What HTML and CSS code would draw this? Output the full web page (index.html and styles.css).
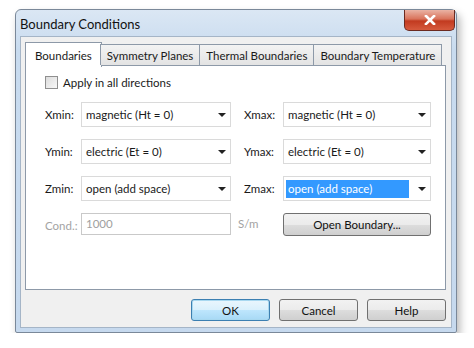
FILE: index.html
```html
<!DOCTYPE html>
<html lang="en">
<head>
  <meta charset="UTF-8">
  <title>Boundary Conditions</title>
  <link rel="stylesheet" href="styles.css">
</head>
<body>
  <!-- Dialog window -->
  <div class="window">
    <div class="titlebar">
      <span class="title">Boundary Conditions</span>
      <div class="close">
        <svg width="12" height="10" viewBox="0 0 12 10"><path d="M2 1 L10 9 M10 1 L2 9" stroke="#fff" stroke-width="2.6" stroke-linecap="square"/></svg>
      </div>
    </div>

    <div class="client">
      <!-- Tabs -->
      <div class="tabs">
        <div class="tab active">Boundaries</div>
        <div class="tab">Symmetry Planes</div>
        <div class="tab">Thermal Boundaries</div>
        <div class="tab">Boundary Temperature</div>
      </div>

      <div class="panel">
        <label class="check"><span class="box"></span>Apply in all directions</label>

        <div class="grid">
          <span class="lbl">Xmin:</span>
          <div class="combo"><span class="val">magnetic (Ht = 0)</span><span class="arrow"></span></div>
          <span class="lbl right">Xmax:</span>
          <div class="combo"><span class="val">magnetic (Ht = 0)</span><span class="arrow"></span></div>

          <span class="lbl">Ymin:</span>
          <div class="combo"><span class="val">electric (Et = 0)</span><span class="arrow"></span></div>
          <span class="lbl right">Ymax:</span>
          <div class="combo"><span class="val">electric (Et = 0)</span><span class="arrow"></span></div>

          <span class="lbl">Zmin:</span>
          <div class="combo"><span class="val">open (add space)</span><span class="arrow"></span></div>
          <span class="lbl right">Zmax:</span>
          <div class="combo focus"><span class="val">open (add space)</span><span class="arrow"></span></div>

          <span class="lbl disabled">Cond.:</span>
          <div class="input">1000</div>
          <span class="unit">S/m</span>
          <button class="btn">Open Boundary...</button>
        </div>
      </div>

      <!-- Dialog buttons -->
      <div class="actions">
        <button class="btn default">OK</button>
        <button class="btn">Cancel</button>
        <button class="btn">Help</button>
      </div>
    </div>
  </div>
</body>
</html>
```

FILE: styles.css
```css
/* General */
body {
  margin: 0;
  background: #fff;
  font-family: 'Lato', 'Liberation Sans', sans-serif;
  font-size: 11.5px;
  color: #1a1a1a;
}

/* Window frame */
.window {
  margin: 9px 0 0 15px;
  width: 440px;
  height: 322px;
  border: 1px solid #7a8899;
  border-radius: 6px 6px 2px 2px;
  background: linear-gradient(#dbe7f4, #c8dbef 40px, #c6d9ee);
  box-shadow: 3px 5px 9px rgba(0, 0, 0, 0.28);
  display: flex;
  flex-direction: column;
}

.titlebar {
  height: 27px;
  display: flex;
  align-items: flex-start;
  padding: 0 0 0 4px;
}

.title {
  margin-top: 6px;
  font-size: 13px;
  color: #111;
}

.close {
  margin-left: auto;
  margin-right: 1px;
  width: 49px;
  height: 20px;
  border: 1px solid #6b2a20;
  border-top: none;
  border-radius: 0 0 5px 5px;
  background: linear-gradient(#eab3a4, #d9735b 45%, #c23a20 55%, #d65a3d);
  display: flex;
  align-items: center;
  justify-content: center;
}

.client {
  flex: 1;
  margin: 0 4px 4px 4px;
  background: #f0f0f0;
  border: 1px solid #a5b5c7;
  padding: 5px 5px 6px 4px;
  display: flex;
  flex-direction: column;
}

/* Tabs */
.tabs {
  display: flex;
  height: 23px;
  padding-left: 3px;
  position: relative;
  z-index: 1;
  white-space: nowrap;
}

.tab {
  flex-shrink: 0;
  margin-top: 2px;
  height: 20px;
  padding: 0 6px;
  border: 1px solid #8d99a8;
  border-bottom: none;
  margin-left: -1px;
  background: linear-gradient(#f3f3f3, #e3e3e3);
  display: flex;
  align-items: center;
}

.tab.active {
  margin: 0 -2px 0 -3px;
  height: 24px;
  padding: 0 9px;
  background: #fff;
}

.tab.active + .tab {
  margin-left: 0;
}

.panel {
  box-sizing: border-box;
  height: 225px;
  background: #fff;
  border: 1px solid #8d99a8;
  padding: 10px 0 0 19px;
}

.check {
  display: flex;
  align-items: center;
  gap: 5px;
  height: 13px;
}

.box {
  width: 11px;
  height: 11px;
  border: 1px solid #8f8f8f;
  background: linear-gradient(135deg, #dcdcdc, #f8f8f8);
}

/* Boundary rows */
.grid {
  margin-top: 13px;
  display: grid;
  grid-template-columns: 36px 150px 52px 148px;
  row-gap: 12px;
  grid-auto-rows: 25px;
}

.lbl {
  align-self: center;
}

.lbl.right {
  padding-left: 13px;
}

.lbl.disabled {
  color: #a3a3a3;
}

.combo {
  box-sizing: border-box;
  border: 1px solid #dadada;
  background: #fff;
  display: flex;
  align-items: center;
  padding: 0 3px 0 3px;
}

.combo .val {
  flex: 1;
  padding: 2px 1px;
}

.combo.focus {
  padding-left: 2px;
}

.combo.focus .val {
  background: #3399ff;
  color: #fff;
  margin-right: 9px;
  padding: 2px 2px 3px;
}

.arrow {
  width: 0;
  height: 0;
  margin-right: 1px;
  border-left: 4px solid transparent;
  border-right: 4px solid transparent;
  border-top: 4px solid #222;
}

.input {
  height: 22px;
  box-sizing: border-box;
  border: 1px solid #c9c9c9;
  background: #fff;
  color: #a0a0a0;
  padding: 3px 4px;
}

.unit {
  padding: 4px 0 0 7px;
  color: #a3a3a3;
}

/* Buttons */
.btn {
  font-family: inherit;
  font-size: 11.5px;
  color: #111;
  height: 22px;
  border: 1px solid #707070;
  border-radius: 3px;
  background: linear-gradient(#f2f2f2, #ebebeb 50%, #dddddd 51%, #cfcfcf);
  padding: 0;
}

.grid .btn {
  height: 23px;
}

.actions {
  margin-top: 9px;
  display: flex;
  justify-content: flex-end;
  gap: 9px;
}

.actions .btn {
  width: 79px;
}

.btn.default {
  border-color: #3c7fb1;
  box-shadow: inset 0 0 0 1px #a8d8f0;
  background: linear-gradient(#eaf6fd, #d9f0fc 50%, #bee6fd 51%, #a7d9f5);
}
```
